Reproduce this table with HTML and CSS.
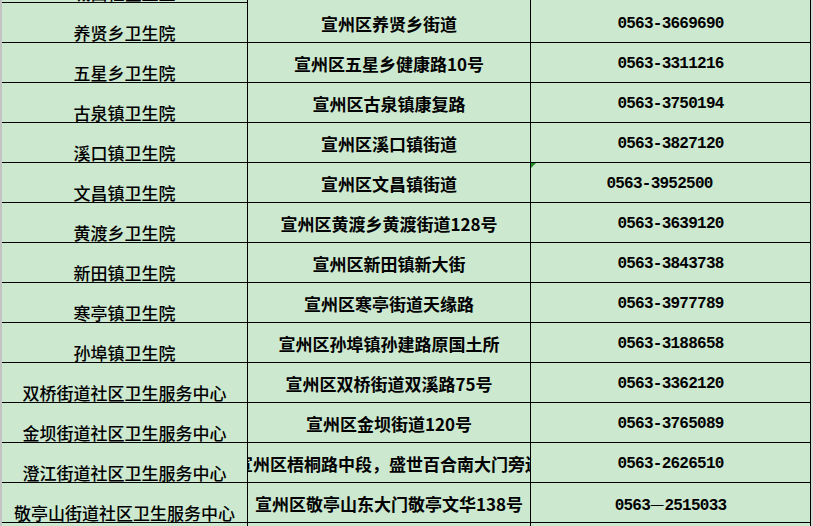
FILE: index.html
```html
<!DOCTYPE html>
<html lang="zh-CN">
<head>
<meta charset="utf-8">
<title>宣州区卫生院</title>
<link rel="stylesheet" href="styles.css">
</head>
<body>
<div class="sheet">
  <div class="cell name"><span>城西社区卫生</span></div>
  <div class="cell addr"></div>
  <div class="cell tel"></div>

  <div class="cell name"><span>养贤乡卫生院</span></div>
  <div class="cell addr"><span>宣州区养贤乡街道</span></div>
  <div class="cell tel"><span>0563-3669690</span></div>

  <div class="cell name"><span>五星乡卫生院</span></div>
  <div class="cell addr"><span>宣州区五星乡健康路10号</span></div>
  <div class="cell tel"><span>0563-3311216</span></div>

  <div class="cell name"><span>古泉镇卫生院</span></div>
  <div class="cell addr"><span>宣州区古泉镇康复路</span></div>
  <div class="cell tel"><span>0563-3750194</span></div>

  <div class="cell name"><span>溪口镇卫生院</span></div>
  <div class="cell addr"><span>宣州区溪口镇街道</span></div>
  <div class="cell tel"><span>0563-3827120</span></div>

  <div class="cell name"><span>文昌镇卫生院</span></div>
  <div class="cell addr"><span>宣州区文昌镇街道</span></div>
  <div class="cell tel flagged"><span class="shift">0563-3952500</span></div>

  <div class="cell name"><span>黄渡乡卫生院</span></div>
  <div class="cell addr"><span>宣州区黄渡乡黄渡街道128号</span></div>
  <div class="cell tel"><span>0563-3639120</span></div>

  <div class="cell name"><span>新田镇卫生院</span></div>
  <div class="cell addr"><span>宣州区新田镇新大街</span></div>
  <div class="cell tel"><span>0563-3843738</span></div>

  <div class="cell name"><span>寒亭镇卫生院</span></div>
  <div class="cell addr"><span>宣州区寒亭街道天缘路</span></div>
  <div class="cell tel"><span>0563-3977789</span></div>

  <div class="cell name"><span>孙埠镇卫生院</span></div>
  <div class="cell addr"><span>宣州区孙埠镇孙建路原国土所</span></div>
  <div class="cell tel"><span>0563-3188658</span></div>

  <div class="cell name"><span>双桥街道社区卫生服务中心</span></div>
  <div class="cell addr"><span>宣州区双桥街道双溪路75号</span></div>
  <div class="cell tel"><span>0563-3362120</span></div>

  <div class="cell name"><span>金坝街道社区卫生服务中心</span></div>
  <div class="cell addr"><span>宣州区金坝街道120号</span></div>
  <div class="cell tel"><span>0563-3765089</span></div>

  <div class="cell name"><span>澄江街道社区卫生服务中心</span></div>
  <div class="cell addr"><span>宣州区梧桐路中段，盛世百合南大门旁边</span></div>
  <div class="cell tel"><span>0563-2626510</span></div>

  <div class="cell name"><span>敬亭山街道社区卫生服务中心</span></div>
  <div class="cell addr"><span>宣州区敬亭山东大门敬亭文华138号</span></div>
  <div class="cell tel"><span>0563<span class="dash">—</span>2515033</span></div>

  <div class="cell name"></div>
  <div class="cell addr"></div>
  <div class="cell tel"></div>
</div>
</body>
</html>
```

FILE: styles.css
```css
html, body {
  margin: 0;
  padding: 0;
}

body {
  background: #d6dcd6;
  width: 813px;
  height: 526px;
  overflow: hidden;
  border-left: 2px solid #c4c4c4;
  box-sizing: border-box;
}

.sheet {
  display: grid;
  grid-template-columns: 245px 282px 279px;
  grid-template-rows: 2px repeat(13, 39px) 3px;
  gap: 1px;
  padding-right: 1px;
  width: 809px;
  background: #000;
  box-sizing: border-box;
}

.cell {
  background: #cce8cf;
  overflow: hidden;
  display: flex;
  justify-content: center;
  white-space: nowrap;
  color: #000;
  position: relative;
}

.cell > span {
  flex: none;
}

.name {
  align-items: flex-end;
  font-family: "Noto Sans CJK SC", "Noto Sans", sans-serif;
  font-size: 17px;
  line-height: 18px;
  font-weight: 500;
}

.addr {
  align-items: center;
  padding-top: 3px;
  box-sizing: border-box;
  font-family: "Noto Sans CJK SC", "Noto Sans", sans-serif;
  font-size: 17px;
  line-height: 20px;
  font-weight: 700;
}

.tel {
  align-items: center;
  padding-top: 3px;
  box-sizing: border-box;
  font-family: "Liberation Mono", monospace;
  font-size: 16px;
  line-height: 20px;
  font-weight: 700;
  letter-spacing: -0.75px;
}

.tel .dash {
  font-family: "Noto Sans CJK SC", sans-serif;
  font-weight: 400;
  letter-spacing: 0;
}

.tel .shift {
  margin-right: 22px;
}

.flagged::before {
  content: "";
  position: absolute;
  left: 0;
  top: 0;
  border-top: 5px solid #1f8a1f;
  border-right: 5px solid transparent;
}
```
